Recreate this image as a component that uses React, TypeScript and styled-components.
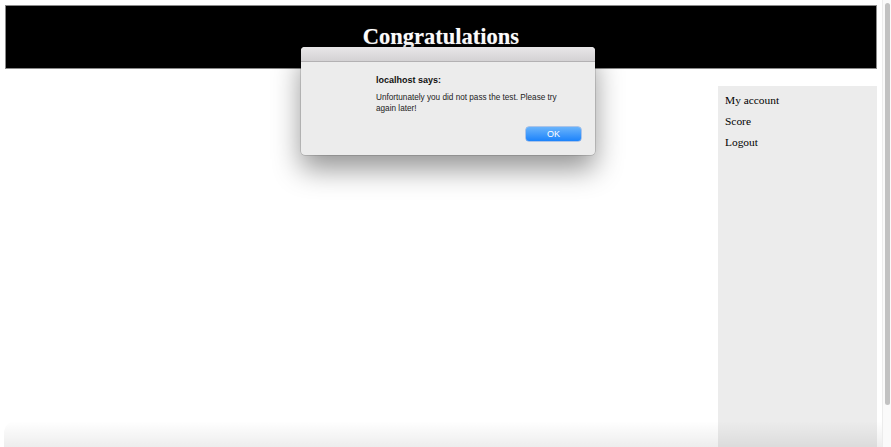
import styled, { createGlobalStyle } from 'styled-components';

const GlobalStyle = createGlobalStyle`
  html, body {
    margin: 0;
    padding: 0;
    height: 100%;
    overflow: hidden;
    background: #fff;
  }
  #root {
    height: 100%;
  }
`;

const Frame = styled.div`
  display: flex;
  height: 447px;
  position: relative;
`;

const Viewport = styled.div`
  flex: 1;
  display: flex;
  flex-direction: column;
  padding: 5px 5px 0;
  min-width: 0;
`;

const Header = styled.header`
  height: 64px;
  box-sizing: border-box;
  background: #000;
  border: 1px solid #8a8a8a;
  display: flex;
  align-items: center;
  justify-content: center;
`;

const Title = styled.h1`
  margin: 0;
  color: #fff;
  font-family: 'Liberation Serif', 'Times New Roman', serif;
  font-weight: bold;
  font-size: 22.5px;
  text-shadow: 0 0 1px rgba(255, 255, 255, 0.4);
`;

const Body = styled.div`
  flex: 1;
  display: flex;
  justify-content: flex-end;
  margin-top: 17px;
`;

const Sidebar = styled.nav`
  width: 159px;
  background: #ececec;
  padding: 8px 7px 0;
  box-sizing: border-box;
  display: flex;
  flex-direction: column;
  gap: 8px;
`;

const NavLink = styled.a`
  font-family: 'Liberation Serif', 'Times New Roman', serif;
  font-size: 11.4px;
  line-height: 13px;
  color: #000;
  text-decoration: none;
  cursor: pointer;
`;

const ScrollTrack = styled.div`
  width: 9px;
  background: #fafafa;
  border-left: 1px solid #ececec;
  padding: 3px 1px 0 2px;
  box-sizing: border-box;
`;

const ScrollThumb = styled.div`
  height: 402px;
  background: #c2c2c2;
  border-radius: 3px;
`;

const BottomShade = styled.div`
  position: absolute;
  left: 4px;
  right: 9px;
  bottom: 0;
  height: 26px;
  border-top-left-radius: 12px;
  background: linear-gradient(to bottom, rgba(0, 0, 0, 0), rgba(0, 0, 0, 0.07));
  pointer-events: none;
`;

const Dialog = styled.div`
  position: absolute;
  left: 301px;
  top: 47px;
  width: 294px;
  height: 108px;
  background: #ececec;
  border-radius: 4px;
  box-shadow: 0 14px 28px rgba(0, 0, 0, 0.42), 0 0 0 0.5px rgba(0, 0, 0, 0.25);
  overflow: hidden;
  display: flex;
  flex-direction: column;
  font-family: 'Liberation Sans', Arial, Helvetica, sans-serif;
`;

const TitleBar = styled.div`
  height: 14px;
  background: linear-gradient(to bottom, #e9e7e9, #d4d2d4);
  border-bottom: 1px solid #b3b1b3;
  flex-shrink: 0;
`;

const DialogContent = styled.div`
  padding: 13px 14px 0 75px;
  display: flex;
  flex-direction: column;
`;

const DialogHeading = styled.div`
  font-size: 9px;
  font-weight: bold;
  color: #111;
  line-height: 11px;
`;

const DialogMessage = styled.div`
  margin-top: 6px;
  font-size: 8.2px;
  line-height: 11px;
  color: #222;
  width: 192px;
`;

const Actions = styled.div`
  display: flex;
  justify-content: flex-end;
  margin-top: 13px;
`;

const OkButton = styled.button`
  width: 55px;
  height: 14px;
  border: none;
  border-radius: 3px;
  background: linear-gradient(to bottom, #6ab4fb, #1c83fb);
  box-shadow: 0 0 0 0.5px rgba(20, 100, 220, 0.6);
  color: #fff;
  font-family: 'Liberation Sans', Arial, sans-serif;
  font-size: 9px;
  line-height: 14px;
  padding: 0;
  cursor: pointer;
`;

const LINKS = ['My account', 'Score', 'Logout'];

export default function App() {
  return (
    <>
      <GlobalStyle />
      <Frame>
        <Viewport>
          <Header>
            <Title>Congratulations</Title>
          </Header>
          <Body>
            <Sidebar>
              {LINKS.map(l => (
                <NavLink key={l}>{l}</NavLink>
              ))}
            </Sidebar>
          </Body>
        </Viewport>
        <ScrollTrack>
          <ScrollThumb />
        </ScrollTrack>
        <BottomShade />
        <Dialog role="alertdialog">
          <TitleBar />
          <DialogContent>
            <DialogHeading>localhost says:</DialogHeading>
            <DialogMessage>
              Unfortunately you did not pass the test. Please try again later!
            </DialogMessage>
            <Actions>
              <OkButton>OK</OkButton>
            </Actions>
          </DialogContent>
        </Dialog>
      </Frame>
    </>
  );
}
